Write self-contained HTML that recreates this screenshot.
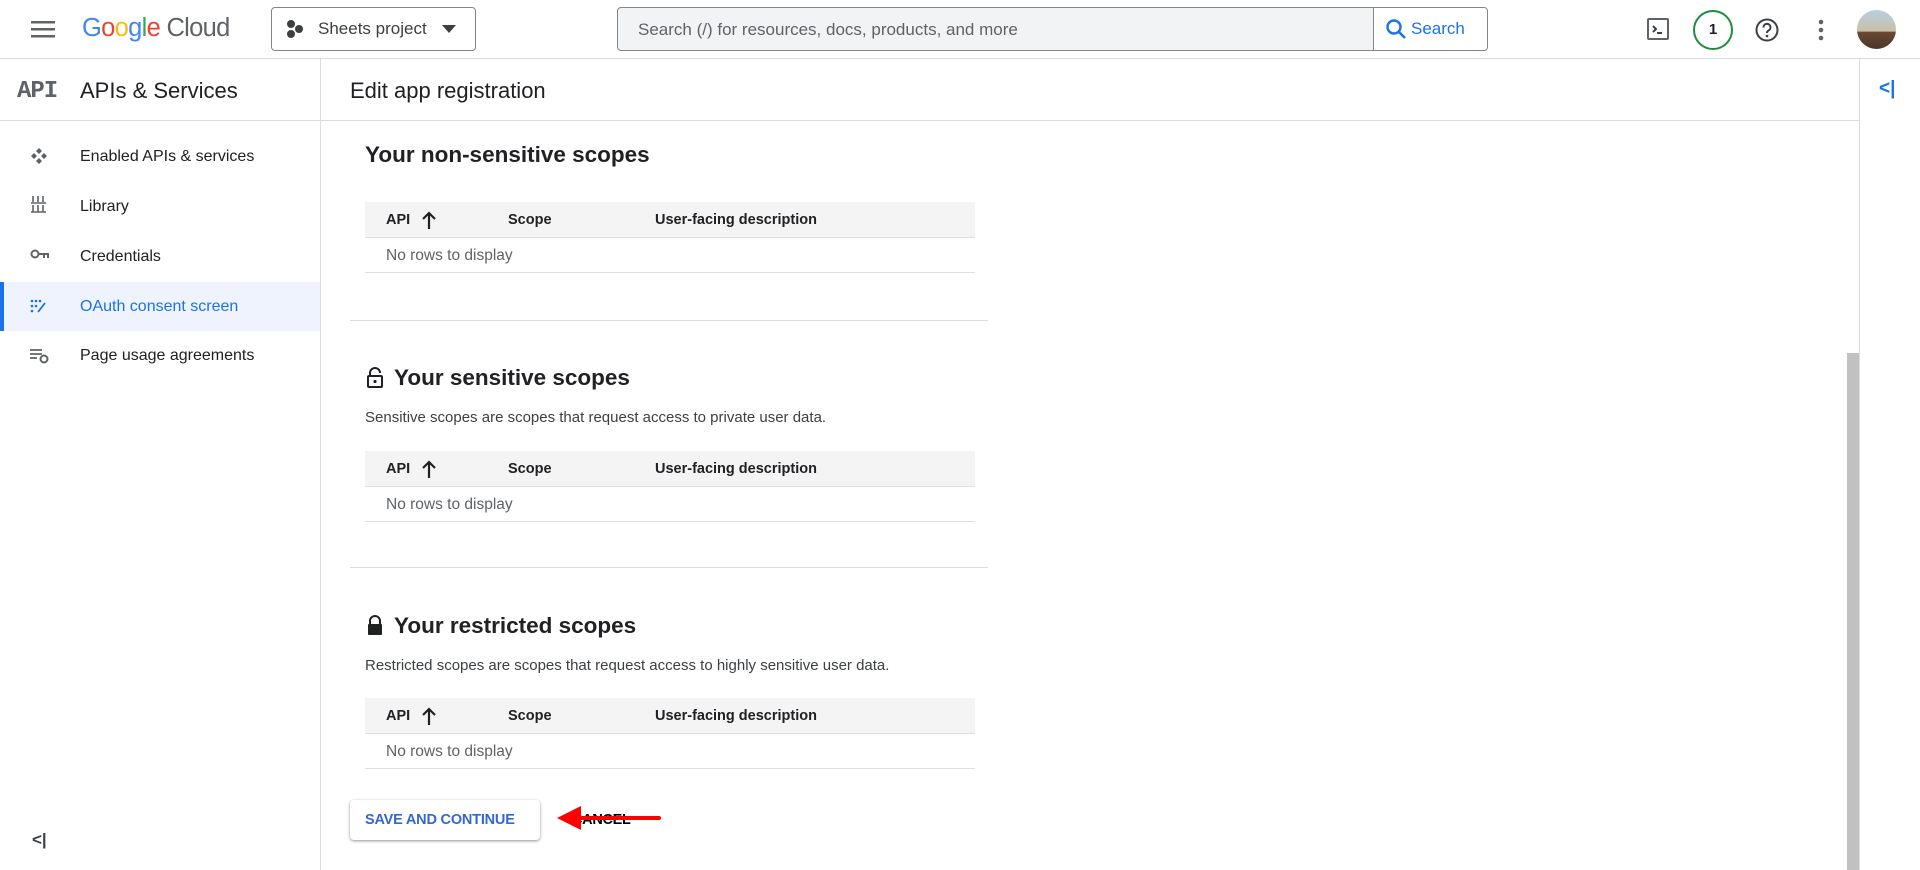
<!DOCTYPE html>
<html><head><meta charset="utf-8"><style>
*{margin:0;padding:0;box-sizing:border-box}
body{width:1920px;height:870px;overflow:hidden;background:#fff;font-family:"Liberation Sans",Arial,sans-serif;color:#202124;position:relative}
.a{position:absolute}
.hdr{left:0;top:0;width:1920px;height:59px;border-bottom:1px solid #dadce0}
.nav{font-size:16px;color:#202124;left:80px}
.th{font-size:14.5px;font-weight:bold;color:#202124}
.tbl{left:365px;width:610px;height:71px}
.tbl .h{position:absolute;left:0;top:0;width:610px;height:36px;background:#f4f4f4;border-bottom:1px solid #e0e0e0}
.tbl .r{position:absolute;left:0;top:36px;width:610px;height:35px;border-bottom:1px solid #e0e0e0}
.tbl span{position:absolute;top:10px}
.tbl .r span{left:21px;top:9px;font-size:15.5px;color:#5f6368}
h2{position:absolute;font-size:22.5px;font-weight:bold;color:#202124}
.desc{font-size:15px;color:#3c4043;left:365px}
.div{left:350px;width:638px;height:1px;background:#dadce0}
</style></head><body>
<div class="a hdr"></div>
<svg class="a" style="left:31px;top:18px" width="24" height="22" viewBox="0 0 24 22"><rect y="3" width="24" height="2.5" fill="#5f6368"/><rect y="10" width="24" height="2.5" fill="#5f6368"/><rect y="17" width="24" height="2.5" fill="#5f6368"/></svg>
<div class="a" style="left:82px;top:14px;font-size:25.5px;letter-spacing:-0.7px"><span style="color:#4285f4">G</span><span style="color:#ea4335">o</span><span style="color:#fbbc04">o</span><span style="color:#4285f4">g</span><span style="color:#34a853">l</span><span style="color:#ea4335">e</span> <span style="color:#5f6368">Cloud</span></div>
<div class="a" style="left:271px;top:7px;width:205px;height:44px;border:1px solid #80868b;border-radius:4px"></div>
<svg class="a" style="left:286px;top:19px" width="18" height="20"><circle cx="5" cy="5" r="4" fill="#3c4043"/><circle cx="13" cy="10" r="4" fill="#3c4043"/><circle cx="5" cy="15" r="4" fill="#3c4043"/></svg>
<div class="a" style="left:318px;top:19px;font-size:17px;color:#3c4043">Sheets project</div>
<svg class="a" style="left:442px;top:25px" width="14" height="8"><path d="M0 0h14L7 8z" fill="#3c4043"/></svg>
<div class="a" style="left:617px;top:7px;width:871px;height:44px;border:1px solid #80868b;border-radius:4px;background:#f1f3f4;overflow:hidden"><div class="a" style="left:755px;top:0;width:116px;height:44px;background:#fff;border-left:1px solid #80868b"></div></div>
<div class="a" style="left:638px;top:20px;font-size:17px;color:#5f6368">Search (/) for resources, docs, products, and more</div>
<svg class="a" style="left:1385px;top:18px" width="22" height="22" viewBox="0 0 22 22"><circle cx="9" cy="9" r="6.5" stroke="#1a73e8" stroke-width="2.4" fill="none"/><path d="M14 14l6 6" stroke="#1a73e8" stroke-width="2.6"/></svg>
<div class="a" style="left:1411px;top:19px;font-size:17px;color:#1a73e8">Search</div>
<svg class="a" style="left:1646px;top:17px" width="24" height="24"><rect x="2" y="2" width="20" height="20" rx="1" stroke="#5f6368" stroke-width="2" fill="none"/><path d="M7 9l3 3-3 3" stroke="#3c4043" stroke-width="2" fill="none"/><path d="M11 16h5" stroke="#3c4043" stroke-width="2"/></svg>
<div class="a" style="left:1693px;top:10px;width:40px;height:40px;border:2.5px solid #1e8e3e;border-radius:50%;text-align:center;line-height:35px;font-size:15px;font-weight:bold">1</div>
<svg class="a" style="left:1754px;top:17px" width="26" height="26"><circle cx="13" cy="13" r="10.5" stroke="#3c4043" stroke-width="2" fill="none"/><path d="M9.5 10.5a3.5 3.5 0 1 1 5 3c-1.2.6-1.5 1.2-1.5 2.5" stroke="#3c4043" stroke-width="2" fill="none"/><circle cx="13" cy="19" r="1.3" fill="#3c4043"/></svg>
<svg class="a" style="left:1818px;top:19px" width="6" height="22"><circle cx="3" cy="3" r="2.3" fill="#5f6368"/><circle cx="3" cy="11" r="2.3" fill="#5f6368"/><circle cx="3" cy="19" r="2.3" fill="#5f6368"/></svg>
<div class="a" style="left:1857px;top:10px;width:39px;height:39px;border-radius:50%;background:linear-gradient(180deg,#b7cfe3 0%,#c9bfa6 55%,#6b4a35 56%,#4a3528 100%)"></div>
<!-- sidebar -->
<div class="a" style="left:320px;top:59px;width:1px;height:811px;background:#dadce0"></div>
<div class="a" style="left:0;top:120px;width:1860px;height:1px;background:#dadce0"></div>
<div class="a" style="left:17px;top:78px;font-family:'Liberation Mono',monospace;font-weight:bold;font-size:24px;color:#5f6368;letter-spacing:-1px">API</div>
<div class="a" style="left:80px;top:78px;font-size:22px">APIs &amp; Services</div>
<div class="a" style="left:350px;top:78px;font-size:22px">Edit app registration</div>
<div class="a" style="left:0;top:282px;width:320px;height:49px;background:#eef3fd"></div>
<div class="a" style="left:0;top:282px;width:4px;height:49px;background:#1a73e8"></div>
<svg class="a" style="left:30px;top:147px" width="18" height="18"><path d="M9 1l3 3-3 3-3-3zM9 11l3 3-3 3-3-3zM1 9l3-3 3 3-3 3zM11 9l3-3 3 3-3 3z" fill="#5f6368"/></svg>
<div class="a nav" style="top:148px">Enabled APIs &amp; services</div>
<svg class="a" style="left:31px;top:196px" width="16" height="18"><path d="M2 0v6M7 0v6M12 0v6M0 7h15M2 9v7M7 9v7M12 9v7M0 16h15" stroke="#5f6368" stroke-width="1.6"/></svg>
<div class="a nav" style="top:198px">Library</div>
<svg class="a" style="left:30px;top:248px" width="20" height="12"><circle cx="5" cy="6" r="3.5" stroke="#5f6368" stroke-width="2" fill="none"/><path d="M8 6h11M14 6v4M18 6v4" stroke="#5f6368" stroke-width="2"/></svg>
<div class="a nav" style="top:248px">Credentials</div>
<svg class="a" style="left:30px;top:298px" width="18" height="18"><g fill="#1a73e8"><circle cx="2" cy="3" r="1.3"/><circle cx="6" cy="3" r="1.3"/><circle cx="10" cy="3" r="1.3"/><circle cx="2" cy="8" r="1.3"/><circle cx="6" cy="8" r="1.3"/><circle cx="2" cy="13" r="1.3"/></g><path d="M8 14l7-9" stroke="#1a73e8" stroke-width="1.8"/></svg>
<div class="a nav" style="top:298px;color:#1a73e8">OAuth consent screen</div>
<svg class="a" style="left:30px;top:348px" width="20" height="16"><path d="M0 2h12M0 6h12M0 10h7" stroke="#5f6368" stroke-width="1.8"/><circle cx="14" cy="11" r="3.5" stroke="#5f6368" stroke-width="2" fill="none"/></svg>
<div class="a nav" style="top:347px">Page usage agreements</div>
<div class="a" style="left:32px;top:830px;font-size:17px;font-weight:bold;color:#3c4043">&lt;|</div>
<!-- right -->
<div class="a" style="left:1859px;top:59px;width:1px;height:811px;background:#dadce0"></div>
<div class="a" style="left:1879px;top:78px;font-size:19px;font-weight:bold;color:#1a73e8">&lt;|</div>
<div class="a" style="left:1847px;top:353px;width:12px;height:517px;background:#c1c1c1"></div>
<!-- content -->
<h2 style="left:365px;top:142px">Your non-sensitive scopes</h2>
<div class="a tbl" style="top:202px"><div class="h"><span class="th" style="left:21px">API</span><span class="th" style="left:143px">Scope</span><span class="th" style="left:290px">User-facing description</span><svg style="position:absolute;left:56px;top:8px" width="16" height="20"><path d="M8 19V3M2 9l6-6 6 6" stroke="#202124" stroke-width="2.2" fill="none"/></svg></div><div class="r"><span>No rows to display</span></div></div>
<div class="a div" style="top:320px"></div>
<svg class="a" style="left:366px;top:367px" width="18" height="21"><path d="M4 9V6a5 5 0 0 1 10 0" stroke="#202124" stroke-width="2" fill="none"/><rect x="2" y="9" width="14" height="11" rx="1" stroke="#202124" stroke-width="2" fill="none"/><circle cx="9" cy="14.5" r="1.6" fill="#202124"/></svg>
<h2 style="left:394px;top:365px">Your sensitive scopes</h2>
<div class="a desc" style="top:409px">Sensitive scopes are scopes that request access to private user data.</div>
<div class="a tbl" style="top:451px"><div class="h"><span class="th" style="left:21px">API</span><span class="th" style="left:143px">Scope</span><span class="th" style="left:290px">User-facing description</span><svg style="position:absolute;left:56px;top:8px" width="16" height="20"><path d="M8 19V3M2 9l6-6 6 6" stroke="#202124" stroke-width="2.2" fill="none"/></svg></div><div class="r"><span>No rows to display</span></div></div>
<div class="a div" style="top:567px"></div>
<svg class="a" style="left:366px;top:615px" width="18" height="21"><path d="M4 9V6a5 5 0 0 1 10 0v3" stroke="#202124" stroke-width="2" fill="none"/><rect x="2" y="9" width="14" height="11" rx="1" fill="#202124"/></svg>
<h2 style="left:394px;top:613px">Your restricted scopes</h2>
<div class="a desc" style="top:657px">Restricted scopes are scopes that request access to highly sensitive user data.</div>
<div class="a tbl" style="top:698px"><div class="h"><span class="th" style="left:21px">API</span><span class="th" style="left:143px">Scope</span><span class="th" style="left:290px">User-facing description</span><svg style="position:absolute;left:56px;top:8px" width="16" height="20"><path d="M8 19V3M2 9l6-6 6 6" stroke="#202124" stroke-width="2.2" fill="none"/></svg></div><div class="r"><span>No rows to display</span></div></div>
<div class="a" style="left:350px;top:800px;width:190px;height:40px;border-radius:4px;background:#fff;box-shadow:0 1px 3px rgba(0,0,0,.3),0 1px 2px rgba(0,0,0,.15)"></div>
<div class="a" style="left:365px;top:812px;font-size:14.5px;font-weight:bold;color:#3367d6;letter-spacing:-0.2px">SAVE AND CONTINUE</div>
<div class="a" style="left:572px;top:812px;font-size:14.5px;font-weight:bold;color:#000;letter-spacing:-0.3px">CANCEL</div>
<div class="a" style="left:566px;top:808px;width:14px;height:20px;background:#fff"></div>
<svg class="a" style="left:555px;top:804px" width="106" height="28"><path d="M24 14h80" stroke="#f00" stroke-width="4" stroke-linecap="round"/><path d="M2 14L26 2v24z" fill="#f00"/></svg>
</body></html>
